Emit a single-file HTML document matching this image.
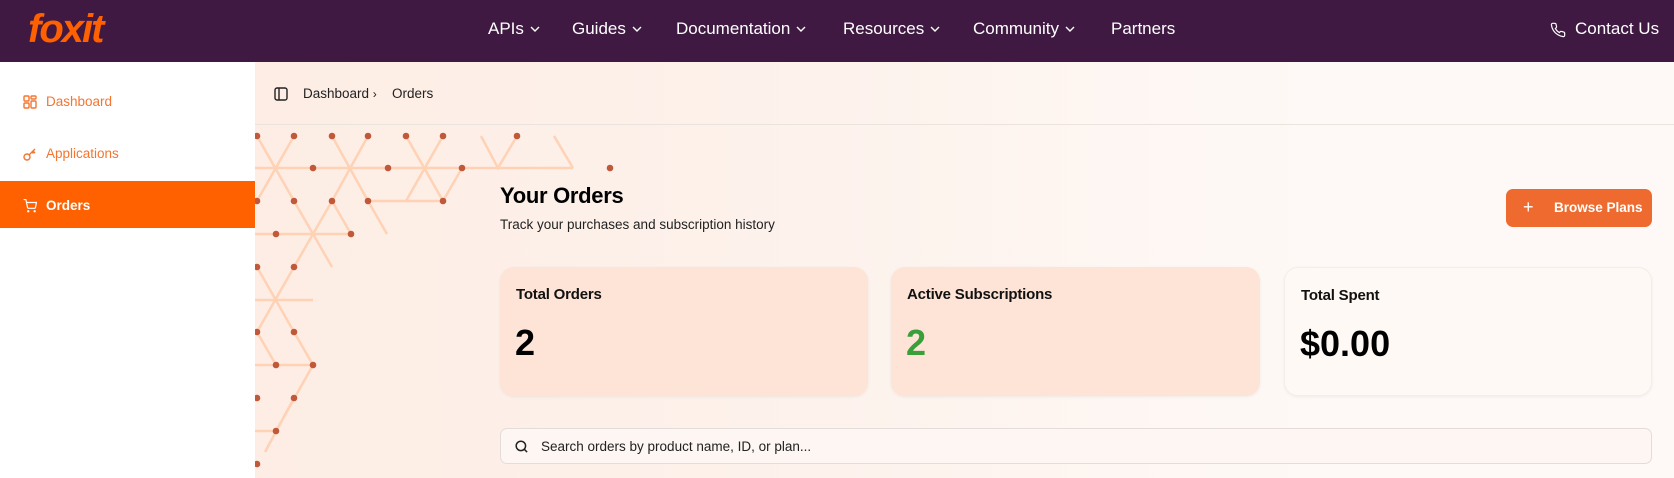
<!DOCTYPE html>
<html><head><meta charset="utf-8">
<style>
*{box-sizing:border-box;margin:0;padding:0}
body{width:1674px;height:478px;overflow:hidden;font-family:"Liberation Sans",sans-serif;position:relative;background:#fff}
.hdr{position:absolute;left:0;top:0;width:1674px;height:62px;background:#3f1942;color:#fff}
.nav{position:absolute;top:19px;font-size:17px;color:#fff;white-space:nowrap}
.nav svg{margin-left:6px;vertical-align:2px}
.side{position:absolute;left:0;top:62px;width:255px;height:416px;background:#fff}
.si{position:absolute;left:23px;font-size:13.5px;color:#f47530;display:flex;align-items:center;gap:9px}
.main{position:absolute;left:255px;top:62px;width:1419px;height:416px;background:linear-gradient(90deg,#fdede4 0%,#fdf2ec 40%,#fef9f6 75%,#fef9f7 100%)}
.bc{position:absolute;left:0;top:0;width:1419px;height:63px;border-bottom:1px solid #ebe3de}
.card{position:absolute;top:267px;height:129px;border-radius:14px;background:#fde4d6;box-shadow:0 1px 3px rgba(0,0,0,.06)}
.card .l{position:absolute;left:16px;top:19px;font-size:15px;font-weight:bold;color:#111;letter-spacing:-0.2px}
.card .n{position:absolute;left:15px;top:55px;font-size:36px;font-weight:bold;color:#000}
</style></head><body>
<div class="hdr">
  <div style="position:absolute;left:28px;top:8px;font-size:40px;line-height:42px;font-weight:bold;font-style:italic;color:#ff6000;letter-spacing:-2px">foxit</div>
  <div class="nav" style="left:488px">APIs<svg width="10" height="6" viewBox="0 0 10 6"><path d="M1 1l4 4 4-4" stroke="#fff" stroke-width="1.4" fill="none"/></svg></div>
  <div class="nav" style="left:572px">Guides<svg width="10" height="6" viewBox="0 0 10 6"><path d="M1 1l4 4 4-4" stroke="#fff" stroke-width="1.4" fill="none"/></svg></div>
  <div class="nav" style="left:676px">Documentation<svg width="10" height="6" viewBox="0 0 10 6"><path d="M1 1l4 4 4-4" stroke="#fff" stroke-width="1.4" fill="none"/></svg></div>
  <div class="nav" style="left:843px">Resources<svg width="10" height="6" viewBox="0 0 10 6"><path d="M1 1l4 4 4-4" stroke="#fff" stroke-width="1.4" fill="none"/></svg></div>
  <div class="nav" style="left:973px">Community<svg width="10" height="6" viewBox="0 0 10 6"><path d="M1 1l4 4 4-4" stroke="#fff" stroke-width="1.4" fill="none"/></svg></div>
  <div class="nav" style="left:1111px">Partners</div>
  <svg style="position:absolute;left:1550px;top:22px" width="16" height="16" viewBox="0 0 24 24"><path d="M22 16.9v3a2 2 0 0 1-2.2 2 19.8 19.8 0 0 1-8.6-3.1 19.5 19.5 0 0 1-6-6A19.8 19.8 0 0 1 2.1 4.2 2 2 0 0 1 4.1 2h3a2 2 0 0 1 2 1.7c.1 1 .4 1.9.7 2.8a2 2 0 0 1-.5 2.1L8 9.9a16 16 0 0 0 6 6l1.3-1.3a2 2 0 0 1 2.1-.4c.9.3 1.8.6 2.8.7a2 2 0 0 1 1.7 2z" stroke="#fff" stroke-width="1.8" fill="none"/></svg>
  <div class="nav" style="left:1575px">Contact Us</div>
</div>
<div class="side">
  <div class="si" style="top:32px"><svg width="14" height="14" viewBox="0 0 14 14" fill="none" stroke="#f47530" stroke-width="1.4"><rect x="1" y="1" width="5" height="5" rx="1"/><rect x="8" y="1" width="5" height="3" rx="1"/><rect x="8" y="6" width="5" height="7" rx="1"/><rect x="1" y="8" width="5" height="5" rx="1"/></svg>Dashboard</div>
  <div class="si" style="top:84px"><svg width="14" height="14" viewBox="0 0 14 14" fill="none" stroke="#f47530" stroke-width="1.4"><circle cx="4" cy="10" r="3"/><path d="M6 8l6-6M10 4l2 2M9 5l1.5 1.5"/></svg>Applications</div>
  <div style="position:absolute;left:0;top:119px;width:255px;height:47px;background:#ff6100"></div>
  <div class="si" style="top:136px;color:#fff;font-weight:bold"><svg width="14" height="14" viewBox="0 0 24 24" fill="none" stroke="#fff" stroke-width="2"><circle cx="9" cy="21" r="1"/><circle cx="20" cy="21" r="1"/><path d="M1 1h4l2.7 13.4a2 2 0 0 0 2 1.6h9.7a2 2 0 0 0 2-1.6L23 6H6"/></svg>Orders</div>
</div>
<div class="main">
  <div class="bc">
    <svg style="position:absolute;left:19px;top:25px" width="14" height="14" viewBox="0 0 14 14" fill="none" stroke="#222" stroke-width="1.4"><rect x="1" y="1" width="12" height="12" rx="2"/><path d="M5 1v12"/></svg>
    <div style="position:absolute;left:48px;top:24px;font-size:13.5px;color:#222">Dashboard <span style="font-size:12px">›</span></div>
    <div style="position:absolute;left:137px;top:24px;font-size:13.5px;color:#222">Orders</div>
  </div>
</div>
<svg style="position:absolute;left:255px;top:126px" width="400" height="352" viewBox="255 126 400 352">
<g stroke="#ffd2b6" stroke-width="2.5" fill="none">
<path d="M255 168H573"/>
<path d="M257 136L294 201M294 136L257 201"/>
<path d="M332 136L368 201M368 136L332 201"/>
<path d="M406 136L443 201M443 136L406 201"/>
<path d="M481 136L498 168L517 136M554 136L573 168"/>
<path d="M462 168L443 201M368 201H443M368 201L387 234"/>
<path d="M294 201L332 267M332 201L294 267M255 234H351M332 201L351 234"/>
<path d="M257 267L294 332M294 267L257 332M255 300H313"/>
<path d="M294 332L313 365L276 431M255 365H313M255 431H276M294 398L265 452"/>
<path d="M257 332L276 365M257 398L255 401"/>
</g>
<g fill="#c0583a">
<circle cx="257" cy="136" r="3.3"/><circle cx="294" cy="136" r="3.3"/><circle cx="332" cy="136" r="3.3"/><circle cx="368" cy="136" r="3.3"/><circle cx="406" cy="136" r="3.3"/><circle cx="443" cy="136" r="3.3"/><circle cx="517" cy="136" r="3.3"/>
<circle cx="313" cy="168" r="3.3"/><circle cx="388" cy="168" r="3.3"/><circle cx="462" cy="168" r="3.3"/><circle cx="610" cy="168" r="3.3"/>
<circle cx="257" cy="201" r="3.3"/><circle cx="294" cy="201" r="3.3"/><circle cx="332" cy="201" r="3.3"/><circle cx="368" cy="201" r="3.3"/><circle cx="443" cy="201" r="3.3"/>
<circle cx="276" cy="234" r="3.3"/><circle cx="351" cy="234" r="3.3"/>
<circle cx="257" cy="267" r="3.3"/><circle cx="294" cy="267" r="3.3"/>
<circle cx="257" cy="332" r="3.3"/><circle cx="294" cy="332" r="3.3"/>
<circle cx="276" cy="365" r="3.3"/><circle cx="313" cy="365" r="3.3"/>
<circle cx="257" cy="398" r="3.3"/><circle cx="294" cy="398" r="3.3"/>
<circle cx="276" cy="431" r="3.3"/><circle cx="257" cy="464" r="3.3"/>
</g></svg>
<div style="position:absolute;left:500px;top:183px;font-size:22px;font-weight:bold;color:#000;letter-spacing:-0.3px">Your Orders</div>
<div style="position:absolute;left:500px;top:217px;font-size:13.5px;color:#222">Track your purchases and subscription history</div>
<div style="position:absolute;left:1506px;top:189px;width:146px;height:38px;border-radius:7px;background:#ee6a2e;color:#fff;font-size:13.5px;font-weight:bold">
  <span style="position:absolute;left:17px;top:8px;font-size:18px;font-weight:normal">+</span>
  <span style="position:absolute;left:48px;top:11px">Browse Plans</span></div>
<div class="card" style="left:500px;width:368px"><div class="l">Total Orders</div><div class="n">2</div></div>
<div class="card" style="left:891px;width:369px"><div class="l">Active Subscriptions</div><div class="n" style="color:#3a9f3a">2</div></div>
<div class="card" style="left:1284px;width:368px;background:#fff9f6;border:1px solid #f5ede8"><div class="l">Total Spent</div><div class="n">$0.00</div></div>
<div style="position:absolute;left:500px;top:428px;width:1152px;height:36px;border:1px solid #e3dcd8;border-radius:7px;background:#fdf6f2">
  <svg style="position:absolute;left:13px;top:10px" width="15" height="15" viewBox="0 0 24 24" fill="none" stroke="#222" stroke-width="2.4"><circle cx="11" cy="11" r="7.5"/><path d="M21 21l-4.5-4.5"/></svg>
  <div style="position:absolute;left:40px;top:10px;font-size:13.5px;color:#222">Search orders by product name, ID, or plan...</div>
</div>
</body></html>
